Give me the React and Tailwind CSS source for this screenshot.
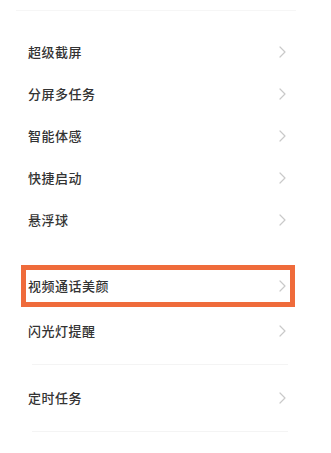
const FIRST_GROUP = ["超级截屏", "分屏多任务", "智能体感", "快捷启动", "悬浮球"];

const Chevron = () => (
    <svg width="7" height="12" viewBox="0 0 7 12" fill="none" className="shrink-0">
        <path d="M1 1l5 5-5 5" stroke="#c9c9c9" strokeWidth="1.2" strokeLinecap="round" strokeLinejoin="round" />
    </svg>
);

const Row = ({ label, className = "" }) => (
    <div className={`flex items-center justify-between ${className}`}>
        <span className="text-[13px] font-medium text-[#333333] tracking-[0.5px]">{label}</span>
        <Chevron />
    </div>
);

export default function App() {
    return (
        <div
            className="w-[331px] h-[453px] bg-white overflow-hidden pt-[10px]"
            style={{ fontFamily: '"Noto Sans CJK SC", "Noto Sans", sans-serif' }}
        >
            {/* faint divider at the top */}
            <div className="ml-4 w-[280px] h-px bg-[#f6f6f6]" />

            <div className="mt-5 flex flex-col">
                {FIRST_GROUP.map((item) => (
                    <Row key={item} label={item} className="h-[42px] pl-[28px] pr-[45px]" />
                ))}
            </div>

            {/* highlighted entry */}
            <div className="mt-[24px] ml-[21px] w-[274px] h-[42px] border-[5px] border-[#ef6b3b] flex items-center justify-between pl-[2px] pr-[4px]">
                <span className="text-[13px] font-medium text-[#333333] tracking-[0.5px]">视频通话美颜</span>
                <Chevron />
            </div>

            <Row label="闪光灯提醒" className="mt-[2px] h-[44px] pl-[28px] pr-[45px]" />

            <div className="mt-[11px] ml-[32px] w-[256px] h-px bg-[#f4f4f4]" />

            <Row label="定时任务" className="mt-[11px] h-[44px] pl-[28px] pr-[45px]" />

            <div className="mt-[11px] ml-[32px] w-[256px] h-px bg-[#f4f4f4]" />
        </div>
    );
}
